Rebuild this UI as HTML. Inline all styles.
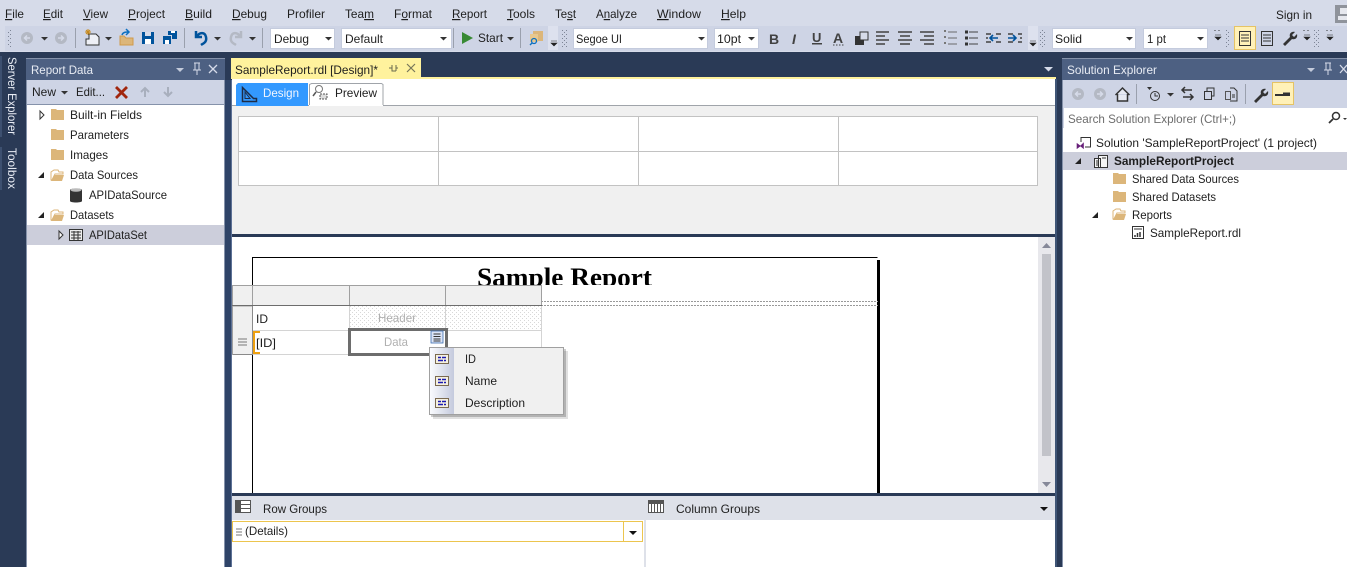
<!DOCTYPE html>
<html><head><meta charset="utf-8"><style>
html,body{margin:0;padding:0;width:1347px;height:567px;overflow:hidden;background:#2a3a56}
svg{display:block;position:absolute;left:0;top:0}
text{font-family:"Liberation Sans",sans-serif;font-size:12px;fill:#1e1e1e}
.w{fill:#e8ecf4}.g{fill:#717171}.u{text-decoration:underline}
</style></head><body>
<svg width="1347" height="567" viewBox="0 0 1347 567" xmlns="http://www.w3.org/2000/svg">
<defs>
<g id="folder"><path d="M0 1h5l1 1h7v10H0z" fill="#dcb67a"/></g>
<g id="ofolder"><path d="M1 12V4l3-2h4l1 2h4v2H5l-3 6z" fill="#fff" stroke="#dcb67a"/><path d="M1 13l3-6h10l-2 6z" fill="#dcb67a"/></g>
<g id="tri"><path d="M0 0l4 4-4 4z" fill="#fff" stroke="#333"/></g>
<g id="otri"><path d="M6 0v6H0z" fill="#222"/></g>
<g id="dd"><path d="M0 0h7l-3.500 3.500z" fill="#333"/></g>
<g id="field"><rect x=".5" y=".5" width="13" height="9" fill="#f4f0e0" stroke="#7a6a50"/><path d="M3 3.500h3M7 3.500h4M3 6.500h5M9 6.500h2" stroke="#1a1ab0" stroke-width="1.400"/></g>
<g id="ovf"><path d="M0 0v2M4 0v2" stroke="#333" stroke-dasharray="1"/><path d="M0 5h6M0 7l3 3 3-3z" fill="#222" stroke="#222" stroke-width=".6"/></g>
<g id="ovf2"><path d="M0 0h6M0 2l3 3 3-3z" fill="#222" stroke="#222" stroke-width=".6"/></g>
<g id="back"><circle cx="6" cy="6" r="6" fill="#b4b9c4"/><path d="M9 6H4M6 3.500L3.500 6 6 8.500" stroke="#d6dbe9" stroke-width="1.500" fill="none"/></g>
<g id="fwd"><circle cx="6" cy="6" r="6" fill="#b4b9c4"/><path d="M3 6h5M6 3.500L8.500 6 6 8.500" stroke="#d6dbe9" stroke-width="1.500" fill="none"/></g>
<pattern id="grip" width="4" height="4" patternUnits="userSpaceOnUse"><rect width="1" height="1" fill="#7d8596"/><rect x="2" y="2" width="1" height="1" fill="#7d8596"/></pattern>
<pattern id="hatch" width="4" height="4" patternUnits="userSpaceOnUse"><rect width="4" height="4" fill="#fff"/><rect width="1" height="1" fill="#d8d8d8"/><rect x="2" y="2" width="1" height="1" fill="#d8d8d8"/></pattern>
<linearGradient id="mg" x1="0" x2="1" y1="0" y2="0"><stop offset="0" stop-color="#fafbfe"/><stop offset="1" stop-color="#c4cadd"/></linearGradient>
<clipPath id="titleclip"><rect x="252" y="258" width="626" height="27"/></clipPath>
</defs>

<!-- Top chrome -->
<rect width="1347" height="52" fill="#d6dbe9"/>
<rect x="5" y="26" width="1342" height="25" fill="#ced4e5"/>
<rect x="7" y="29" width="5" height="18" fill="url(#grip)"/>
<rect x="548" y="26" width="10" height="24" fill="#dde1ee"/>
<rect x="562" y="29" width="5" height="18" fill="url(#grip)"/>
<rect x="1028" y="26" width="10" height="24" fill="#dde1ee"/>
<rect x="1040" y="29" width="5" height="18" fill="url(#grip)"/>
<rect x="1225" y="29" width="5" height="18" fill="url(#grip)"/>
<rect x="1314" y="29" width="5" height="18" fill="url(#grip)"/>

<!-- Menu -->
<text y="18" x="5" textLength="19" lengthAdjust="spacingAndGlyphs"><tspan class="u">F</tspan>ile</text>
<text y="18" x="43" textLength="20" lengthAdjust="spacingAndGlyphs"><tspan class="u">E</tspan>dit</text>
<text y="18" x="83" textLength="25" lengthAdjust="spacingAndGlyphs"><tspan class="u">V</tspan>iew</text>
<text y="18" x="128" textLength="37" lengthAdjust="spacingAndGlyphs"><tspan class="u">P</tspan>roject</text>
<text y="18" x="185" textLength="27" lengthAdjust="spacingAndGlyphs"><tspan class="u">B</tspan>uild</text>
<text y="18" x="232" textLength="35" lengthAdjust="spacingAndGlyphs"><tspan class="u">D</tspan>ebug</text>
<text y="18" x="287" textLength="38" lengthAdjust="spacingAndGlyphs">Profiler</text>
<text y="18" x="345" textLength="29" lengthAdjust="spacingAndGlyphs">Tea<tspan class="u">m</tspan></text>
<text y="18" x="394" textLength="38" lengthAdjust="spacingAndGlyphs">F<tspan class="u">o</tspan>rmat</text>
<text y="18" x="452" textLength="35" lengthAdjust="spacingAndGlyphs"><tspan class="u">R</tspan>eport</text>
<text y="18" x="507" textLength="28" lengthAdjust="spacingAndGlyphs"><tspan class="u">T</tspan>ools</text>
<text y="18" x="555" textLength="21" lengthAdjust="spacingAndGlyphs">Te<tspan class="u">s</tspan>t</text>
<text y="18" x="596" textLength="41" lengthAdjust="spacingAndGlyphs">A<tspan class="u">n</tspan>alyze</text>
<text y="18" x="657" textLength="44" lengthAdjust="spacingAndGlyphs"><tspan class="u">W</tspan>indow</text>
<text y="18" x="721" textLength="25" lengthAdjust="spacingAndGlyphs"><tspan class="u">H</tspan>elp</text>
<text y="19" x="1276" textLength="36" lengthAdjust="spacingAndGlyphs">Sign in</text>
<rect x="1335" y="5" width="12" height="18" fill="#8f939b"/>
<rect x="1340" y="8" width="7" height="6" fill="#e6e8ee"/><rect x="1338" y="16" width="9" height="4" fill="#e6e8ee"/>

<!-- Toolbar icons left -->
<use href="#back" x="21" y="32"/><use href="#dd" x="41" y="37"/><use href="#fwd" x="55" y="32"/>
<rect x="75" y="28" width="1" height="20" fill="#9aa0ad"/>
<path d="M89 34h7l3 3v8h-13v-6h3z" fill="#eef0f6" stroke="#333"/><path d="M88 29v6M85 32h6M86 30l4 4M90 30l-4 4" stroke="#c78a1e"/>
<use href="#dd" x="105" y="37"/>
<path d="M120 36h4l2 2h7v7h-13z" fill="#dcb67a" stroke="#d09a4a"/><path d="M122 35c1-3 4-3 6-3M126 29l3 3-3 3" stroke="#0e70c0" stroke-width="1.500" fill="none"/>
<path d="M142 32h12v12h-12z" fill="#00539c"/><rect x="145" y="32" width="6" height="4" fill="#d6dbe9"/><rect x="145" y="39" width="6" height="5" fill="#fff"/>
<path d="M163 36h8v8h-8zM168 31h9v8h-5v-4h-4z" fill="#00539c"/><rect x="165" y="40" width="4" height="4" fill="#fff"/><rect x="171" y="31" width="4" height="2" fill="#fff"/>
<rect x="184" y="28" width="1" height="20" fill="#9aa0ad"/>
<path d="M196 31v6h6M197 36c3-4 8-4 9 1s-2 6-5 8" stroke="#00539c" stroke-width="2.500" fill="none"/>
<use href="#dd" x="214" y="37"/>
<path d="M241 31v6h-6M240 36c-3-4-8-4-9 1s2 6 5 8" stroke="#b4b9c4" stroke-width="2.500" fill="none"/>
<use href="#dd" x="249" y="37"/>
<rect x="262" y="28" width="1" height="20" fill="#9aa0ad"/>

<!-- Combos -->
<g fill="#fff" stroke="#c4cbdd">
<rect x="270.500" y="28.500" width="64" height="20"/><rect x="341.500" y="28.500" width="110" height="20"/>
<rect x="573.500" y="28.500" width="134" height="20"/><rect x="714.500" y="28.500" width="44" height="20"/>
<rect x="1052.500" y="28.500" width="83" height="20"/><rect x="1143.500" y="28.500" width="64" height="20"/></g>
<text y="43" x="274" textLength="35" lengthAdjust="spacingAndGlyphs">Debug</text>
<text y="43" x="345" textLength="38" lengthAdjust="spacingAndGlyphs">Default</text>
<text y="43" x="576" textLength="46" lengthAdjust="spacingAndGlyphs">Segoe UI</text>
<text y="43" x="717" textLength="24" lengthAdjust="spacingAndGlyphs">10pt</text>
<text y="43" x="1055" textLength="27" lengthAdjust="spacingAndGlyphs">Solid</text>
<text y="43" x="1147" textLength="19" lengthAdjust="spacingAndGlyphs">1 pt</text>
<use href="#dd" x="325" y="37"/><use href="#dd" x="440" y="37"/><use href="#dd" x="698" y="37"/><use href="#dd" x="748" y="37"/><use href="#dd" x="1126" y="37"/><use href="#dd" x="1197" y="37"/>

<rect x="453" y="28" width="1" height="20" fill="#9aa0ad"/>
<path d="M462 32l11 6-11 6z" fill="#388a34"/>
<text y="42" x="478" textLength="25" lengthAdjust="spacingAndGlyphs">Start</text>
<use href="#dd" x="507" y="37"/>
<rect x="520" y="28" width="1" height="20" fill="#9aa0ad"/>
<rect x="533" y="31" width="10" height="10" fill="#dcb67a"/><rect x="530" y="34" width="8" height="8" fill="#e8c88f"/><circle cx="534" cy="41" r="2.500" fill="none" stroke="#0e70c0" stroke-width="1.300"/><path d="M532 43l-2 2" stroke="#0e70c0" stroke-width="1.300"/>
<use href="#ovf2" x="551" y="41"/>

<!-- Format icons -->
<text x="769" y="44" style="font-size:14px;font-weight:bold;fill:#424242">B</text>
<text x="792" y="44" style="font-size:14px;font-weight:bold;font-style:italic;fill:#424242">I</text>
<text x="812" y="42" style="font-size:13px;font-weight:bold;fill:#424242">U</text><rect x="812" y="43" width="10" height="1.500" fill="#424242"/>
<text x="833" y="43" style="font-size:14px;font-weight:bold;fill:#424242">A</text><path d="M833 45h11" stroke="#424242" stroke-dasharray="1.500"/>
<rect x="855" y="36" width="9" height="9" fill="#333"/><rect x="860" y="32" width="8" height="8" fill="#d6dbe9" stroke="#333"/>
<path d="M876 32h13M876 36h9M876 40h13M876 44h9" stroke="#424242" stroke-width="1.600"/>
<path d="M898 32h14M900 36h10M898 40h14M900 44h10" stroke="#424242" stroke-width="1.600"/>
<path d="M920 32h14M924 36h10M920 40h14M924 44h10" stroke="#424242" stroke-width="1.600"/>
<path d="M948 32h9M948 38h9M948 44h9" stroke="#6a6a6a"/><path d="M944 31h2M944 37h2M944 43h2" stroke="#777" stroke-width="2"/>
<path d="M969 32h9M969 38h9M969 44h9" stroke="#424242"/><path d="M965 32h3M965 38h3M965 44h3" stroke="#333" stroke-width="3"/>
<path d="M986 34h5M986 42h5M986 38h2M996 34h5M996 42h5" stroke="#424242" stroke-width="1.500"/><path d="M998 38h-7M993 35l-3 3 3 3" stroke="#00539c" stroke-width="1.600" fill="none"/>
<path d="M1008 34h5M1008 42h5M1020 38h2M1018 34h4M1018 42h4" stroke="#424242" stroke-width="1.500"/><path d="M1008 38h8M1013 35l3 3-3 3" stroke="#00539c" stroke-width="1.600" fill="none"/>
<use href="#ovf2" x="1030" y="41"/>

<use href="#ovf" x="1215" y="30"/>
<rect x="1234.500" y="26.500" width="21" height="23" fill="#fff1b8" stroke="#e5c365"/>
<path d="M1239.500 31.500h11v14h-11z" fill="none" stroke="#333"/><path d="M1241 35h8M1241 38h8M1241 41h8" stroke="#333"/>
<path d="M1261.500 31.500h11v14h-11z" fill="none" stroke="#333"/><path d="M1263 35h8M1263 38h8M1263 41h8" stroke="#333"/>
<path d="M1283 44l7-7c-1-3 1-6 5-5l-3 3 2 2 3-3c1 4-2 6-5 5l-7 7z" fill="#333"/>
<use href="#ovf" x="1304" y="30"/><use href="#ovf" x="1327" y="30"/>

<!-- Vertical tool tabs -->
<rect x="0" y="52" width="26" height="515" fill="#2a3a56"/>
<rect x="0" y="56" width="2" height="81" fill="#3d5070"/><rect x="0" y="147" width="2" height="43" fill="#3d5070"/>
<text transform="translate(8,57) rotate(90)" class="w" textLength="78" lengthAdjust="spacingAndGlyphs">Server Explorer</text>
<text transform="translate(8,148) rotate(90)" class="w" textLength="41" lengthAdjust="spacingAndGlyphs">Toolbox</text>

<!-- Report Data panel -->
<rect x="26" y="58" width="199" height="509" fill="#fff"/>
<rect x="26" y="58" width="199" height="22" fill="#4d6082"/>
<rect x="26" y="58" width="199" height="1" fill="#8592aa"/>
<rect x="26" y="80" width="199" height="25" fill="#ced4e5"/>
<rect x="26" y="80" width="1" height="487" fill="#8592aa"/><rect x="224" y="80" width="1" height="487" fill="#8592aa"/>
<rect x="26" y="104" width="199" height="1" fill="#8592aa"/>
<text y="74" x="31" class="w" textLength="62" lengthAdjust="spacingAndGlyphs">Report Data</text>
<path d="M176 68h8l-4 4z" fill="#c4cbdb"/><path d="M194 63h6M195 63v7h4v-7M193 70h8M197 70v5" stroke="#d6dbe9" fill="none"/><path d="M209 65l8 8M217 65l-8 8" stroke="#d6dbe9" stroke-width="1.300"/>
<text y="96" x="32" textLength="24" lengthAdjust="spacingAndGlyphs">New</text><use href="#dd" x="61" y="91"/>
<text y="96" x="76" textLength="29" lengthAdjust="spacingAndGlyphs">Edit...</text>
<path d="M116 87l11 11M127 87l-11 11" stroke="#a1260d" stroke-width="2.800"/>
<path d="M145 97v-9M141 92l4-4 4 4" stroke="#a8afbd" stroke-width="2" fill="none"/>
<path d="M168 87v9M164 92l4 4 4-4" stroke="#a8afbd" stroke-width="2" fill="none"/>

<use href="#tri" x="40" y="111"/>
<use href="#folder" x="51" y="108"/><use href="#folder" x="51" y="128"/><use href="#folder" x="51" y="148"/>
<use href="#otri" x="38" y="172"/><use href="#ofolder" x="50" y="168"/>
<use href="#otri" x="38" y="212"/><use href="#ofolder" x="50" y="208"/>
<rect x="27" y="225" width="197" height="20" fill="#cccedb"/>
<use href="#tri" x="59" y="231"/>
<text y="119" x="70" textLength="72" lengthAdjust="spacingAndGlyphs">Built-in Fields</text>
<text y="139" x="70" textLength="59" lengthAdjust="spacingAndGlyphs">Parameters</text>
<text y="159" x="70" textLength="38" lengthAdjust="spacingAndGlyphs">Images</text>
<text y="179" x="70" textLength="68" lengthAdjust="spacingAndGlyphs">Data Sources</text>
<text y="199" x="89" textLength="78" lengthAdjust="spacingAndGlyphs">APIDataSource</text>
<text y="219" x="70" textLength="44" lengthAdjust="spacingAndGlyphs">Datasets</text>
<text y="239" x="89" textLength="58" lengthAdjust="spacingAndGlyphs">APIDataSet</text>
<path d="M70 190c0-2 12-2 12 0v11c0 2-12 2-12 0z" fill="#333"/><ellipse cx="76" cy="190" rx="5.500" ry="1.700" fill="#bbb"/>
<rect x="69.500" y="229.500" width="13" height="11" fill="#eee" stroke="#333"/><path d="M71 232h10M71 235h10M71 238h10M74 231v9M78 231v9" stroke="#333"/>

<!-- Document tab -->
<rect x="231" y="58" width="190" height="20" fill="#fff29d"/>
<rect x="231" y="77" width="825" height="2" fill="#fff29d"/>
<rect x="232" y="79" width="824" height="488" fill="#fff"/>
<text y="74" x="235" textLength="143" lengthAdjust="spacingAndGlyphs">SampleReport.rdl [Design]*</text>
<path d="M389 68h3M392 65v6h4M396 65v6M396 68h2" stroke="#6a6a50" fill="none"/>
<path d="M407 64l8 8M415 64l-8 8" stroke="#77775a" stroke-width="1.200"/>
<path d="M1044 67h9l-4.500 4.500z" fill="#d6dbe9"/>

<!-- Design / Preview tabs -->
<path d="M309.500 105.500v-21l2-1h70l1.500 1v21" fill="#fff" stroke="#a0a4aa"/>
<rect x="232" y="105" width="824" height="1" fill="#a0a4aa"/>
<rect x="309" y="105" width="74" height="1" fill="#fff"/>
<path d="M236 85l2-2h70v23h-72z" fill="#3399ff"/>
<path d="M242.500 87.500l11 11h3v3h-14z" fill="none" stroke="#1e2c46" stroke-width="1.500"/><path d="M245 92l5 6.500h-5z" fill="#3399ff" stroke="#1e2c46"/>
<text y="97" x="263" class="w" style="fill:#f2f6ff" textLength="36" lengthAdjust="spacingAndGlyphs">Design</text>
<circle cx="319" cy="89" r="3.500" fill="#fff" stroke="#777"/><path d="M316 92l-3 4" stroke="#555" stroke-width="1.500"/><path d="M320 94h7v5h-7z" fill="#ddd" stroke="#555" stroke-dasharray="2 1"/>
<text y="97" x="335" textLength="42" lengthAdjust="spacingAndGlyphs">Preview</text>

<!-- Header area -->
<rect x="232" y="106" width="824" height="128" fill="#f0f0f0"/>
<rect x="238.500" y="116.500" width="799" height="69" fill="#fff" stroke="#c2c2c2"/>
<path d="M438.500 116v70M638.500 116v70M838.500 116v70M238 151.500h800" stroke="#c2c2c2"/>
<rect x="232" y="234" width="824" height="3" fill="#2a3a56"/>

<!-- Report surface -->
<rect x="1038" y="237" width="17" height="256" fill="#e8e8ec"/>
<rect x="1042" y="254" width="9" height="202" fill="#c2c3c9"/>
<path d="M1042 248l4.500-5 4.500 5z" fill="#868999"/><path d="M1042 482l4.500 5 4.500-5z" fill="#868999"/>
<path d="M252.500 493V257.500H877.500" fill="none" stroke="#000"/>
<rect x="877" y="260" width="3" height="233" fill="#000"/>
<path d="M253 301.500h625M253 305.500h625" stroke="#999" stroke-dasharray="2 1"/>
<text x="477" y="286" clip-path="url(#titleclip)" style="font-family:'Liberation Serif',serif;font-size:26.700px;font-weight:bold;fill:#000" textLength="175" lengthAdjust="spacingAndGlyphs">Sample Report</text>

<!-- Tablix -->
<rect x="232.500" y="285.500" width="309" height="20" fill="#f0f0f0" stroke="#a0a0a0"/>
<path d="M252.500 285v20M349.500 285v20M445.500 285v20" stroke="#a0a0a0"/>
<rect x="232" y="305" width="310" height="1" fill="#6d6d6d"/>
<rect x="232.500" y="306.500" width="20" height="48" fill="#f0f0f0" stroke="#c8c8c8"/>
<rect x="232" y="354" width="21" height="1" fill="#8a8a8a"/><rect x="232" y="306" width="1" height="49" fill="#a0a0a0"/><rect x="252" y="306" width="1" height="49" fill="#8a8a8a"/>
<rect x="253" y="306" width="289" height="49" fill="#fff"/>
<rect x="350" y="306" width="192" height="24" fill="url(#hatch)"/>
<path d="M253 330.500h289M253 354.500h289M349.500 306v49M445.500 306v49M541.500 306v49" stroke="#d4d4d4"/>
<path d="M238 339h9M238 342h9M238 345h9" stroke="#777"/>
<rect x="253" y="331" width="7" height="2" fill="#eea00f"/><rect x="253" y="331" width="2" height="23" fill="#eea00f"/><rect x="253" y="352" width="7" height="2" fill="#eea00f"/>
<text y="323" x="256" textLength="12" lengthAdjust="spacingAndGlyphs">ID</text>
<text y="347" x="256" textLength="20" lengthAdjust="spacingAndGlyphs">[ID]</text>
<text y="322" x="378" style="fill:#b0b0b0" textLength="38" lengthAdjust="spacingAndGlyphs">Header</text>
<rect x="349.500" y="329.500" width="97" height="25" fill="#fff" stroke="#6d6d6d" stroke-width="3"/>
<text y="346" x="384" style="fill:#b0b0b0" textLength="24" lengthAdjust="spacingAndGlyphs">Data</text>
<rect x="431" y="331" width="12" height="12" fill="#dbe4f7" stroke="#3b6db0" stroke-width=".8"/><path d="M433.500 334h7M433.500 336.500h7M433.500 339h7M433.500 341h7" stroke="#333" stroke-width=".9"/>

<!-- Field popup -->
<rect x="433" y="351" width="135" height="68" fill="#000" opacity=".12"/>
<rect x="431" y="349" width="135" height="68" fill="#000" opacity=".2"/>
<rect x="429.500" y="347.500" width="134" height="67" fill="#f0f0f0" stroke="#a0a0a0"/>
<rect x="430" y="348" width="24" height="66" fill="url(#mg)"/>
<use href="#field" x="435" y="354"/><use href="#field" x="435" y="376"/><use href="#field" x="435" y="398"/>
<text y="363" x="465" textLength="11" lengthAdjust="spacingAndGlyphs">ID</text>
<text y="385" x="465" textLength="32" lengthAdjust="spacingAndGlyphs">Name</text>
<text y="407" x="465" textLength="60" lengthAdjust="spacingAndGlyphs">Description</text>

<!-- Groups -->
<rect x="232" y="493" width="824" height="3" fill="#2a3a56"/>
<rect x="232" y="496" width="824" height="24" fill="#dee1e9"/>
<rect x="235" y="500" width="16" height="13" fill="#fff"/>
<path d="M235.500 500.500h15v12h-15zM240.500 500v13M235 504.500h16M235 508.500h16" fill="none" stroke="#555"/>
<rect x="235" y="500" width="5" height="13" fill="#555"/>
<text y="513" x="263" textLength="64" lengthAdjust="spacingAndGlyphs">Row Groups</text>
<rect x="648" y="500" width="16" height="13" fill="#fff"/>
<path d="M648.500 500.500h15v12h-15zM651.500 500v13M654.500 500v13M657.500 500v13M660.500 500v13" fill="none" stroke="#555"/><rect x="648" y="500" width="16" height="4" fill="#555"/>
<text y="513" x="676" textLength="84" lengthAdjust="spacingAndGlyphs">Column Groups</text>
<path d="M1040 507h8l-4 4z" fill="#111"/>
<rect x="644" y="520" width="2" height="47" fill="#dee1e9"/>
<rect x="232.500" y="521.500" width="410" height="20" fill="#fff" stroke="#ecc54e"/>
<path d="M623.500 521v21" stroke="#ecc54e"/>
<path d="M236 529h6M236 532h6M236 535h6" stroke="#777"/>
<text y="535" x="245" textLength="43" lengthAdjust="spacingAndGlyphs">(Details)</text>
<path d="M629 531h8l-4 4z" fill="#111"/>

<!-- Divider -->
<rect x="225" y="52" width="6" height="515" fill="#2a3a56"/>
<rect x="225" y="80" width="6" height="487" fill="#2f4468"/>
<rect x="231" y="80" width="1" height="487" fill="#5d7196"/>
<rect x="1055" y="79" width="2" height="488" fill="#3f5576"/>
<rect x="1057" y="52" width="5" height="515" fill="#2a3a56"/>

<!-- Solution Explorer -->
<rect x="1062" y="58" width="285" height="509" fill="#fff"/>
<rect x="1062" y="58" width="285" height="22" fill="#4d6082"/>
<rect x="1062" y="58" width="285" height="1" fill="#8592aa"/>
<rect x="1062" y="80" width="285" height="48" fill="#ced4e5"/>
<rect x="1062" y="80" width="1" height="487" fill="#8592aa"/>
<text y="74" x="1067" class="w" textLength="90" lengthAdjust="spacingAndGlyphs">Solution Explorer</text>
<path d="M1307 68h8l-4 4z" fill="#c4cbdb"/><path d="M1325 63h6M1326 63v7h4v-7M1324 70h8M1328 70v5" stroke="#d6dbe9" fill="none"/><path d="M1340 65l7 8M1347 65l-7 8" stroke="#d6dbe9" stroke-width="1.300"/>
<use href="#back" x="1072" y="88"/><use href="#fwd" x="1094" y="88"/>
<path d="M1115.500 95l7-7 7 7M1117.500 94v7h10v-7" fill="#e6e9f2" stroke="#333" stroke-width="1.500"/>
<rect x="1136" y="84" width="1" height="20" fill="#9aa0ad"/>
<circle cx="1155" cy="96" r="4.500" fill="none" stroke="#333"/><path d="M1155 93v3h3" fill="none" stroke="#333"/><path d="M1147 87h5l-2.500 3z" fill="#333"/>
<use href="#dd" x="1167" y="93"/>
<path d="M1182 90h10M1185 87l-3 3 3 3M1193 97h-10M1190 94l3 3-3 3" stroke="#333" stroke-width="1.500" fill="none"/>
<path d="M1204.500 91.500h7v8h-7zM1207 91v-3h7v8h-2" fill="none" stroke="#333"/>
<path d="M1225.500 91.500h5v8h-5z" fill="none" stroke="#555"/><path d="M1230 88h4l3 3v10h-7" fill="none" stroke="#333"/><path d="M1232 95h3M1232 97h3" stroke="#333"/>
<rect x="1245" y="84" width="1" height="20" fill="#9aa0ad"/>
<path d="M1254 101l7-7c-1-3 1-6 5-5l-3 3 2 2 3-3c1 4-2 6-5 5l-7 7z" fill="#333"/>
<rect x="1272.500" y="82.500" width="21" height="22" fill="#fff1b8" stroke="#e5c365"/>
<path d="M1275 95h15" stroke="#333" stroke-width="2"/><path d="M1283 92.500h7v2h-7z" fill="#333"/>
<rect x="1064" y="108" width="283" height="20" fill="#fff"/>
<text y="123" x="1068" style="fill:#6d6d6d" textLength="168" lengthAdjust="spacingAndGlyphs">Search Solution Explorer (Ctrl+;)</text>
<circle cx="1336" cy="116" r="3.500" fill="none" stroke="#333" stroke-width="1.500"/><path d="M1333 119l-4 4" stroke="#333" stroke-width="1.800"/>
<path d="M1343 118h4l-2 2z" fill="#333"/>

<path d="M1081 147v-9.500h9.500v9.500z" fill="#fff" stroke="#333"/><rect x="1076" y="142" width="9" height="7" fill="#fff"/><path d="M1077 143.500l2 1.500 1.500 1 3-3v5.500l-3-2.500-1.500 1-2 1.500z" fill="#68217a" stroke="#68217a" stroke-width=".6"/>
<text y="147" x="1096" textLength="221" lengthAdjust="spacingAndGlyphs">Solution 'SampleReportProject' (1 project)</text>
<rect x="1063" y="152" width="284" height="18" fill="#cccedb"/>
<use href="#otri" x="1075" y="158"/>
<path d="M1098.500 155.500h9v12h-9zM1094.500 158.500h6v9h-6z" fill="#f4f4f4" stroke="#333"/><path d="M1096 161h3M1096 163h3M1096 165h3M1102 158h4" stroke="#333"/>
<text y="165" x="1114" style="font-weight:bold" textLength="120" lengthAdjust="spacingAndGlyphs">SampleReportProject</text>
<use href="#folder" x="1113" y="172"/><use href="#folder" x="1113" y="190"/>
<use href="#otri" x="1092" y="212"/><use href="#ofolder" x="1112" y="207"/>
<text y="183" x="1132" textLength="107" lengthAdjust="spacingAndGlyphs">Shared Data Sources</text>
<text y="201" x="1132" textLength="84" lengthAdjust="spacingAndGlyphs">Shared Datasets</text>
<text y="219" x="1132" textLength="40" lengthAdjust="spacingAndGlyphs">Reports</text>
<text y="237" x="1150" textLength="91" lengthAdjust="spacingAndGlyphs">SampleReport.rdl</text>
<rect x="1132.500" y="226.500" width="11" height="12" fill="#fff" stroke="#333"/><path d="M1134 229h8" stroke="#333"/><path d="M1135 237v-2M1137.500 237v-4M1140 237v-5" stroke="#333" stroke-width="1.500"/>
</svg>
</body></html>
